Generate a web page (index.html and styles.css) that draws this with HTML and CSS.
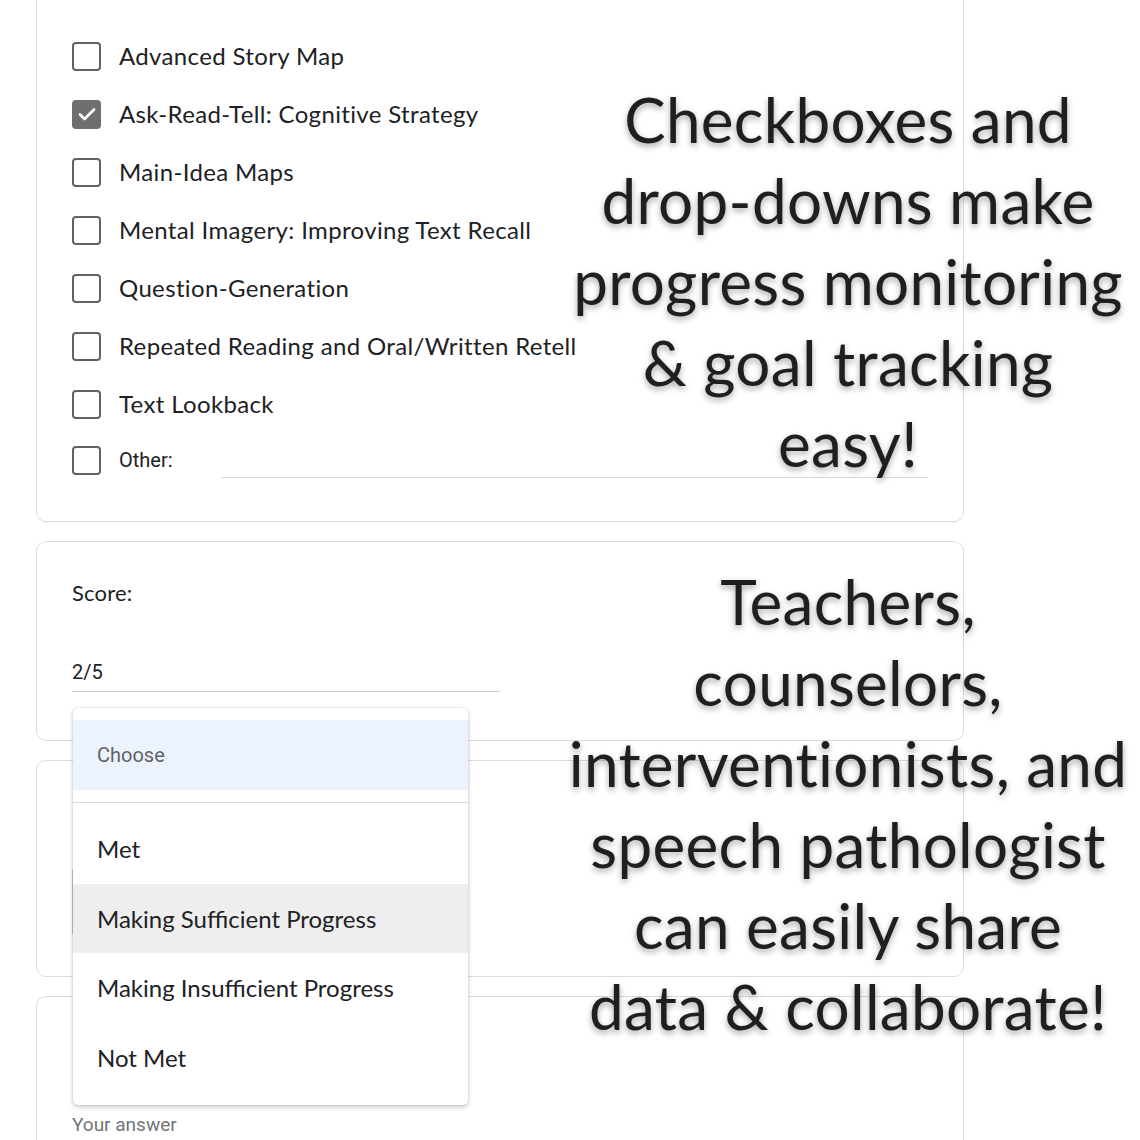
FILE: index.html
```html
<!DOCTYPE html>
<html>
<head>
<meta charset="utf-8">
<link rel="stylesheet" href="styles.css">
</head>
<body>
<div class="page">
  <div class="form">
    <section class="card card-options">
      <ul class="options">
        <li class="opt"><span class="box"></span><span class="label">Advanced Story Map</span></li>
        <li class="opt"><span class="box checked"><svg viewBox="0 0 24 24" width="24" height="24"><path d="M5 12.5l4.5 4.5L19 7.5" fill="none" stroke="#fff" stroke-width="2.6" stroke-linecap="round" stroke-linejoin="round"/></svg></span><span class="label">Ask-Read-Tell: Cognitive Strategy</span></li>
        <li class="opt"><span class="box"></span><span class="label">Main-Idea Maps</span></li>
        <li class="opt"><span class="box"></span><span class="label">Mental Imagery: Improving Text Recall</span></li>
        <li class="opt"><span class="box"></span><span class="label">Question-Generation</span></li>
        <li class="opt"><span class="box"></span><span class="label">Repeated Reading and Oral/Written Retell</span></li>
        <li class="opt"><span class="box"></span><span class="label">Text Lookback</span></li>
        <li class="opt other"><span class="box"></span><span class="label-other">Other:</span><span class="other-line"></span></li>
      </ul>
    </section>
    <section class="card card-score">
      <div class="q">Score:</div>
      <div class="answer">2/5</div>
    </section>
    <section class="card card-goal">
      <div class="mark"></div>
      <div class="select-box"></div>
    </section>
    <section class="card card-notes">
      <div class="placeholder">Your answer</div>
    </section>
  </div>

  <div class="menu">
    <div class="menu-choose">Choose</div>
    <div class="menu-divider"></div>
    <div class="menu-item">Met</div>
    <div class="menu-item hover">Making Sufficient Progress</div>
    <div class="menu-item">Making Insufficient Progress</div>
    <div class="menu-item">Not Met</div>
  </div>

  <div class="promo promo-1">Checkboxes and<br>drop-downs make<br>progress monitoring<br>&amp; goal tracking<br>easy!</div>
  <div class="promo promo-2">Teachers,<br>counselors,<br>interventionists, and<br>speech pathologist<br>can easily share<br>data &amp; collaborate!</div>
</div>
</body>
</html>
```

FILE: styles.css
```css
* { box-sizing: border-box; }
html, body { margin: 0; padding: 0; background: #fff; }
.page {
  position: relative;
  width: 1140px;
  height: 1140px;
  overflow: hidden;
  background: #fff;
}
.form {
  margin-left: 36px;
  width: 928px;
  margin-top: -30px;
  display: flex;
  flex-direction: column;
  gap: 19px;
}
.card {
  border: 1px solid #dadce0;
  border-radius: 10px;
  background: #fff;
  padding-left: 35px;
  padding-right: 35px;
}
.card-options {
  padding-top: 56px;
  padding-bottom: 34px;
}
.options { list-style: none; margin: 0; padding: 0; }
.opt {
  height: 58px;
  display: flex;
  align-items: center;
}
.box {
  width: 29px;
  height: 29px;
  border: 2.5px solid #5f6368;
  border-radius: 4px;
  flex: none;
  display: flex;
  align-items: center;
  justify-content: center;
}
.box.checked { background: #6f6f6f; border-color: #6f6f6f; }
.label {
  margin-left: 18px;
  font-family: "Lato", sans-serif;
  font-size: 24px;
  color: #202124;
  letter-spacing: 0.35px;
  position: relative;
  top: -1px;
}
.opt.other { height: 54px; align-items: center; }
.label-other {
  margin-left: 18px;
  font-family: "Roboto", sans-serif;
  font-size: 20px;
  color: #202124;
  width: 102px;
  flex: none;
}
.other-line {
  align-self: flex-end;
  margin-bottom: 9px;
  height: 1px;
  background: #dadce0;
  flex: 1;
}
.card-score { height: 200px; padding-top: 36px; }
.q {
  font-family: "Lato", sans-serif;
  font-size: 22px;
  color: #202124;
  line-height: 30px;
  letter-spacing: 0.2px;
}
.answer {
  margin-top: 50px;
  width: 428px;
  font-family: "Roboto", sans-serif;
  font-size: 20px;
  color: #202124;
  line-height: 28px;
  padding-bottom: 5px;
  border-bottom: 1px solid #c8cacd;
}
.card-goal { height: 217px; padding-top: 45px; }
.mark {
  width: 3px;
  height: 8px;
  background: #555;
  margin-left: 1px;
  border-radius: 1px;
}
.select-box {
  margin-top: 53px;
  width: 200px;
  height: 70px;
  border: 1px solid #c4c6c9;
  border-radius: 4px;
}
.card-notes { height: 200px; padding-top: 117px; }
.placeholder {
  font-family: "Roboto", sans-serif;
  font-size: 19px;
  line-height: 22px;
  color: #70757a;
}

.menu {
  position: absolute;
  left: 73px;
  top: 708px;
  width: 395px;
  height: 397px;
  background: #fff;
  border-radius: 5px;
  box-shadow: 0 2px 5px rgba(0,0,0,0.22), 0 0 2px rgba(0,0,0,0.12);
  padding: 12px 0 13px;
}
.menu-choose {
  height: 70px;
  background: #edf3fd;
  display: flex;
  align-items: center;
  padding-left: 24px;
  font-family: "Roboto", sans-serif;
  font-size: 20px;
  color: #5f6368;
}
.menu-divider {
  margin-top: 12px;
  margin-bottom: 11px;
  height: 1px;
  background: #dadce0;
}
.menu-item {
  height: 69.5px;
  display: flex;
  align-items: center;
  padding-left: 24px;
  font-family: "Lato", sans-serif;
  font-size: 24px;
  color: #202124;
}
.menu-item.hover { background: #eeeeee; }

.promo {
  position: absolute;
  left: 548px;
  width: 600px;
  text-align: center;
  font-family: "Lato", sans-serif;
  font-size: 62px;
  line-height: 81px;
  color: #1f1f1f;
  text-shadow: 0 3px 6px rgba(0,0,0,0.35);
  letter-spacing: 0.3px;
}
.promo-1 { top: 79px; }
.promo-2 { top: 561px; }
```
